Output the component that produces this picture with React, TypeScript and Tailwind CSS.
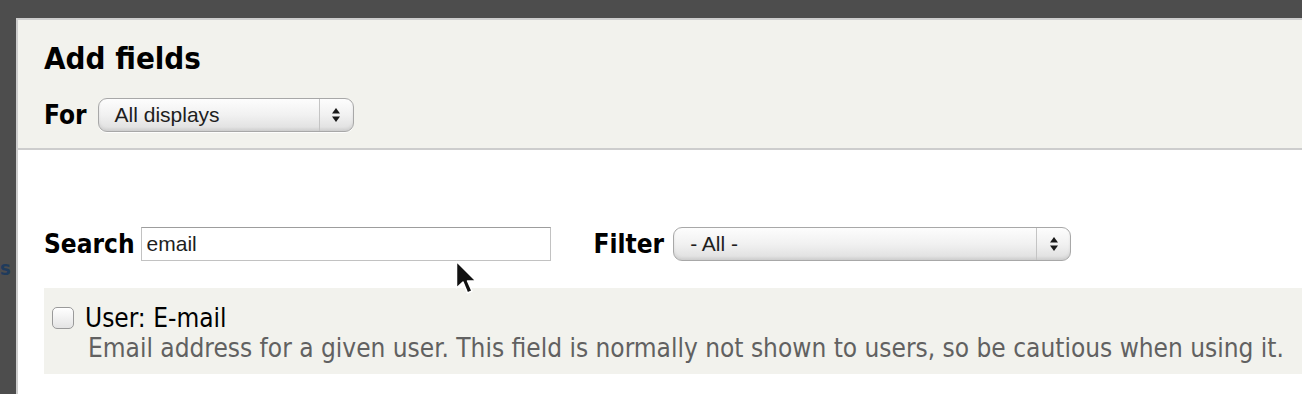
import React from 'react';

const lucida = { fontFamily: '"DejaVu Sans Condensed", "DejaVu Sans", sans-serif' };
const helv = { fontFamily: '"Liberation Sans", Arial, sans-serif' };

function Arrows() {
  return (
    <svg width="10" height="16" viewBox="0 0 10 16" className="block">
      <path d="M5 1 L9 6.5 L1 6.5 Z" fill="#1a1a1a" />
      <path d="M5 15 L9 9.5 L1 9.5 Z" fill="#1a1a1a" />
    </svg>
  );
}

function AquaSelect({ value, width }: { value: string; width: string }) {
  return (
    <div
      className={`${width} h-[34px] flex items-stretch rounded-[9px] border border-[#a8a8a8] bg-gradient-to-b from-[#fdfdfd] via-[#f1f1f1] to-[#dedede] shadow-[inset_0_-2px_3px_rgba(0,0,0,0.08),0_1px_0_rgba(255,255,255,0.8)]`}
    >
      <div className="flex-1 flex items-center pl-4 text-[21px] text-[#1e1e1e]" style={helv}>
        {value}
      </div>
      <div className="w-[34px] border-l border-[#c4c4c4] flex items-center justify-center">
        <Arrows />
      </div>
    </div>
  );
}

export default function App() {
  return (
    <div className="w-[1302px] h-[394px] bg-[#4d4d4d] flex flex-col overflow-hidden relative" style={lucida}>
      <div className="h-[18px] shrink-0" />
      <div className="flex flex-1 min-h-0">
        <div className="w-[16px] shrink-0 overflow-hidden pt-[240px]">
          <span className="block text-[20px] font-bold leading-none text-[#1f3b5c]">s</span>
        </div>
        <div className="flex-1 flex flex-col border-t-2 border-l-2 border-[#cdcdcd] bg-white">
          {/* header */}
          <div className="h-[130px] shrink-0 bg-[#f2f2ed] border-b-2 border-[#cdcdcd] pl-[26px] pt-[20px]">
            <h1 className="text-[31px] font-bold leading-[36px] text-black">Add fields</h1>
            <div className="flex items-center gap-[11px] mt-[22px]">
              <span className="text-[26px] font-bold leading-none text-black">For</span>
              <AquaSelect value="All displays" width="w-[256px]" />
            </div>
          </div>

          {/* body */}
          <div className="pl-[26px] pt-[77px]">
            <div className="flex items-center">
              <span className="text-[26px] font-bold leading-none text-black">Search</span>
              <div
                className="ml-[6px] w-[410px] h-[34px] border border-[#c2c2c2] border-t-[#9d9d9d] bg-white flex items-center pl-[5px] text-[21px] text-[#1e1e1e]"
                style={helv}
              >
                email
              </div>
              <span className="ml-[43px] text-[26px] font-bold leading-none text-black">Filter</span>
              <div className="ml-[9px]">
                <AquaSelect value="- All -" width="w-[398px]" />
              </div>
            </div>

            <div className="mt-[27px] h-[86px] bg-[#f2f2ed] pl-[8px] pt-[17px]">
              <div className="flex items-center gap-[11px]">
                <span className="w-[22px] h-[22px] shrink-0 rounded-[5px] border border-[#9a9a9a] bg-gradient-to-b from-white to-[#e4e4e4] shadow-[inset_0_1px_1px_rgba(255,255,255,0.9)]" />
                <span className="text-[26px] leading-[26px] text-black">User: E-mail</span>
              </div>
              <div className="pl-[36px] text-[26px] leading-[34px] text-[#616161] whitespace-nowrap">
                Email address for a given user. This field is normally not shown to users, so be cautious when using it.
              </div>
            </div>
          </div>
        </div>
      </div>

      {/* mouse pointer */}
      <svg className="absolute left-[455px] top-[260px]" width="26" height="38" viewBox="0 0 26 38">
        <path
          d="M1.5 1.5 L1.5 28 L8 22 L12.5 33 L17 31 L12.5 21 L21 21 Z"
          fill="#111"
          stroke="#fff"
          strokeWidth="1.5"
          strokeLinejoin="round"
        />
      </svg>
    </div>
  );
}
